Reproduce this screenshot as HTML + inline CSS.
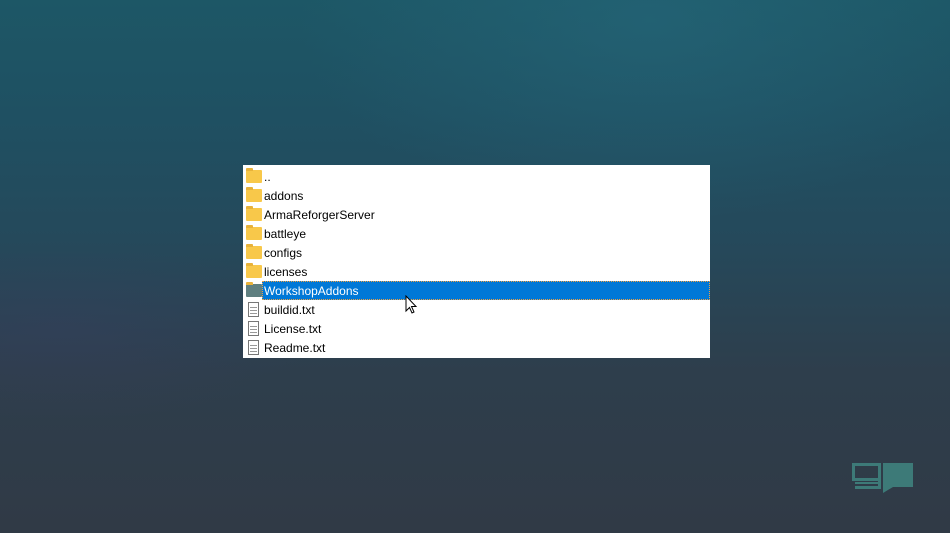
<!DOCTYPE html>
<html><head><style>
html,body{margin:0;padding:0}
body{width:950px;height:533px;overflow:hidden;position:relative;font-family:"Liberation Sans",sans-serif;
background:linear-gradient(180deg,#1d5766 0%,#1f5062 22%,#25495b 45%,#2e3e4c 70%,#303a46 100%);}
.bg2{position:absolute;inset:0;background:
radial-gradient(ellipse 350px 200px at 650px 20px,rgba(40,110,130,.45),transparent),
radial-gradient(ellipse 260px 90px at 60px 330px,rgba(60,60,100,.3),transparent);}
.panel{position:absolute;left:243px;top:165px;width:467px;height:193px;background:#fff;font-size:12px;color:#000}
.row{position:absolute;left:0;height:19px;width:467px}
.row span{position:absolute;left:21px;top:3px}
.sel{background:#0078d7;left:19px!important;width:448px!important;border:1px dotted #f0a040;box-sizing:border-box}
.fold{position:absolute;left:3px;top:3px;width:16px;height:13px;background:#f8c84a;border-radius:1px}
.fold:before{content:"";position:absolute;left:0;top:-2px;width:7px;height:3px;background:#e8b23a;border-radius:1px 1px 0 0}
.file{position:absolute;left:5px;top:2px;width:11px;height:15px;border:1px solid #777;background:#fff;box-sizing:border-box;
background-image:repeating-linear-gradient(180deg,transparent 0 2px,#999 2px 3px);background-size:7px 11px;background-position:1px 2px;background-repeat:no-repeat}
</style></head><body>
<div class="bg2"></div>
<div class="panel">
<div class="row" style="top:2px"><div class="fold"></div><span>..</span></div>
<div class="row" style="top:21px"><div class="fold"></div><span>addons</span></div>
<div class="row" style="top:40px"><div class="fold"></div><span>ArmaReforgerServer</span></div>
<div class="row" style="top:59px"><div class="fold"></div><span>battleye</span></div>
<div class="row" style="top:78px"><div class="fold"></div><span>configs</span></div>
<div class="row" style="top:97px"><div class="fold"></div><span>licenses</span></div>
<div class="row sel" style="top:116px"></div>
<div class="row" style="top:116px"><div class="fold" style="background:#5f7f80"></div><span style="color:#fff">WorkshopAddons</span></div>
<div class="row" style="top:135px"><div class="file"></div><span>buildid.txt</span></div>
<div class="row" style="top:154px"><div class="file"></div><span>License.txt</span></div>
<div class="row" style="top:173px"><div class="file"></div><span>Readme.txt</span></div>
<svg style="position:absolute;left:162px;top:130px" width="14" height="22" viewBox="0 0 14 22"><path d="M1 1 L1 16 L4.5 12.5 L7 18 L9 17 L6.5 11.5 L11 11.5 Z" fill="#fff" stroke="#000" stroke-width="1"/></svg>
</div>
<svg style="position:absolute;left:850px;top:461px" width="65" height="32" viewBox="0 0 65 32">
<g fill="#3d7a78">
<path d="M2 2h29v26h-3v-23h-23v12h23v3h-26z"/>
<rect x="5" y="21" width="23" height="2"/>
<rect x="5" y="25" width="23" height="3"/>
<path d="M33 2h30v24h-20l-10 6z"/>
</g></svg>
</body></html>
